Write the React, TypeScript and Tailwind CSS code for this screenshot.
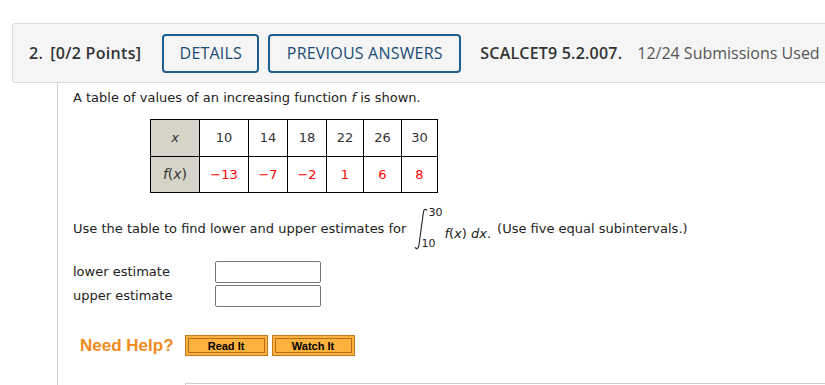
const verdana = { fontFamily: "Verdana, 'DejaVu Sans', sans-serif" };

const xs = ["10", "14", "18", "22", "26", "30"];
const fx = ["\u221213", "\u22127", "\u22122", "1", "6", "8"];
const widths = ["w-[49px]", "w-[39px]", "w-[39px]", "w-[37px]", "w-[38px]", "w-[36px]"];

function Integral() {
  return (
    <span className="relative inline-block h-[42px] w-[28px] align-middle">
      <svg className="absolute left-0 top-0" width="14" height="42" viewBox="0 0 14 42">
        <path d="M13 2.5 C11.8 0.6 9.6 1 9.3 5 L5 37 C4.4 41 2.2 41.5 1 39.2" fill="none" stroke="#222" strokeWidth="1.1" />
      </svg>
      <span className="absolute left-[14px] top-[-3px] text-[11px] text-[#222]">30</span>
      <span className="absolute left-[7px] top-[28px] text-[11px] text-[#222]">10</span>
    </span>
  );
}

export default function App() {
  return (
    <div className="relative h-[385px] w-[825px] overflow-hidden bg-white" style={{ fontFamily: "'Open Sans', sans-serif" }}>
      <div className="ml-[12px] mt-[23px] flex h-[60px] w-[840px] items-center rounded-[3px] border border-[#dcdcdc] bg-[#f5f5f5] pl-[16px] text-[16px] text-[#333]">
        <span className="font-semibold tracking-[0.3px]">2.</span>
        <span className="ml-[7px] font-semibold tracking-[0.3px]">[0/2 Points]</span>
        <button className="ml-[21px] flex h-[39px] w-[97px] items-center justify-center rounded-[4px] border-2 border-[#1d5f8f] text-[16px] tracking-[0.2px] text-[#1a4c75]">
          DETAILS
        </button>
        <button className="ml-[9px] flex h-[39px] w-[193px] items-center justify-center rounded-[4px] border-2 border-[#1d5f8f] text-[16px] tracking-[0.2px] text-[#1a4c75]">
          PREVIOUS ANSWERS
        </button>
        <span className="ml-[19px] font-semibold tracking-[0.2px]">SCALCET9 5.2.007.</span>
        <span className="ml-[15px] text-[#555]">12/24 Submissions Used</span>
      </div>

      <div className="ml-[57px] h-[310px] border-l border-[#cfcfcf] pl-[15px] text-[13px] text-[#222]" style={verdana}>
        <p className="pt-[7px] leading-[16px]">
          A table of values of an increasing function <i>f</i> is shown.
        </p>

        <table className="ml-[77px] mt-[13px] border-collapse border border-black text-center">
          <tbody>
            <tr className="h-[37px]">
              <td className="w-[49px] border border-black bg-[#d6d3c8] italic text-[#333]">x</td>
              {xs.map((v, i) => (
                <td key={v} className={`${widths[i]} border border-black text-[#333]`}>
                  {v}
                </td>
              ))}
            </tr>
            <tr className="h-[36px]">
              <td className="border border-black bg-[#d6d3c8] text-[14px] text-[#333]">
                <i>f</i>(<i>x</i>)
              </td>
              {fx.map((v) => (
                <td key={v} className="border border-black text-[#ff0000]">
                  {v}
                </td>
              ))}
            </tr>
          </tbody>
        </table>

        <div className="mt-[15px] flex items-center">
          <span>Use the table to find lower and upper estimates for</span>
          <span className="ml-[8px]">
            <Integral />
          </span>
          <span className="mt-[10px] ml-[2px]">
            <i>f</i>(<i>x</i>) <i>dx</i>.
          </span>
          <span className="ml-[6px]">(Use five equal subintervals.)</span>
        </div>

        <div className="mt-[11px] flex items-center">
          <span className="w-[142px]">lower estimate</span>
          <input className="h-[22px] w-[106px] rounded-[2px] border border-[#777] bg-white" />
        </div>
        <div className="mt-[2px] flex items-center">
          <span className="w-[142px]">upper estimate</span>
          <input className="h-[22px] w-[106px] rounded-[2px] border border-[#777] bg-white" />
        </div>

        <div className="mt-[26px] flex items-center" style={{ fontFamily: "'Liberation Sans', Arial, sans-serif" }}>
          <span className="ml-[7px] text-[17px] font-bold text-[#f08a1c]">Need Help?</span>
          <button className="ml-[11px] border border-[#c8771c] bg-[#fdb23d] p-[2px]">
            <span className="flex h-[15px] w-[77px] items-center justify-center border border-[#b46d1e] text-[11px] font-bold text-black">
              Read It
            </span>
          </button>
          <button className="ml-[4px] border border-[#c8771c] bg-[#fdb23d] p-[2px]">
            <span className="flex h-[15px] w-[77px] items-center justify-center border border-[#b46d1e] text-[11px] font-bold text-black">
              Watch It
            </span>
          </button>
        </div>

        <div className="ml-[112px] mt-[24px] h-[20px] w-[700px] border-l border-t border-[#cfcfcf]" />
      </div>
    </div>
  );
}
